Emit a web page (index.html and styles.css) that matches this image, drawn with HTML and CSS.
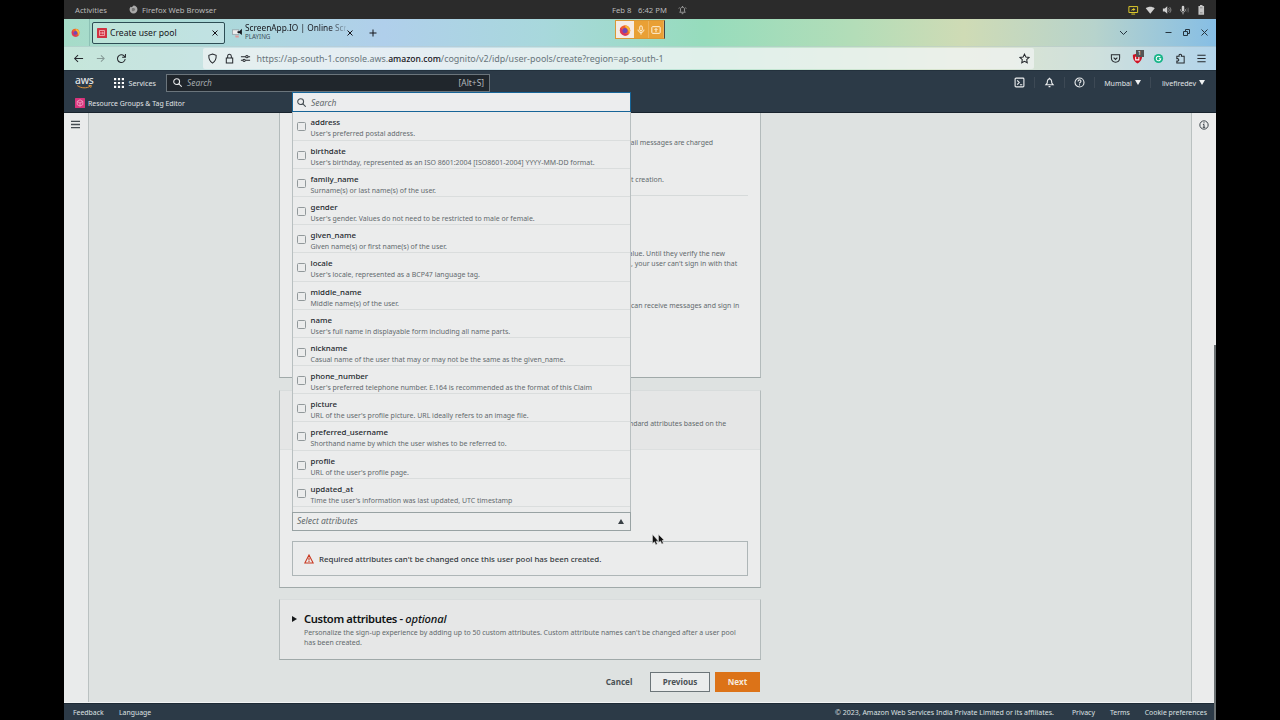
FILE: index.html
```
<!DOCTYPE html>
<html lang="en">
<head>
    <meta charset="UTF-8">
    <meta name="viewport" content="width=device-width, initial-scale=1.0">
    <title>Create user pool</title>
    <link rel="stylesheet" href="styles.css">
</head>
<body>
    <svg class="defs">
        <symbol id="firefox" viewBox="0 0 16 16">
            <circle cx="8" cy="8.5" r="7" fill="#f0602c"/>
            <path d="M8 1.500c4 .5 7 3.500 7 7 0 2-1 4-2 5 .5-4-1-6-3-7.500C8.500 4.500 8 3 8 1.500z" fill="#f9b934"/>
            <path d="M2 4.500c-1.500 4 0 8.500 3.500 10.300 3 1.500 6.500.5 8-1.800-2 1-5 .8-6.500-1C5 10 5 7 2 4.500z" fill="#d93363"/>
            <circle cx="8" cy="8.800" r="3.400" fill="#7148b5"/>
        </symbol>
        <symbol id="search" viewBox="0 0 16 16">
            <circle cx="6.500" cy="6.500" r="5.200" fill="none" stroke="currentColor" stroke-width="1.900"/>
            <path d="M10 10l5.500 5.500" stroke="currentColor" stroke-width="1.900"/>
        </symbol>
        <symbol id="close" viewBox="0 0 8 8">
            <path d="M1.500 1.500l5 5M6.500 1.500l-5 5" stroke="currentColor" fill="none"/>
        </symbol>
    </svg>

    <div class="desktop">
        <div class="gnome-bar">
            <span class="activities">Activities</span>
            <svg class="app-icon" viewBox="0 0 16 16"><path d="M3 3l2 1 3-3c4 0 7 3 7 7s-3 7-7 7-7-3-7-7c0-2 .5-3 2-5z" fill="#aaa"/><path d="M5 6c2-1 5-1 6 2-1 3-4 4-6 2z" fill="#777"/></svg>
            <span class="app-name">Firefox Web Browser</span>
            <span class="date">Feb 8</span>
            <span class="time">6:42 PM</span>
            <svg class="bell" viewBox="0 0 16 16" fill="none" stroke="#bbb" stroke-width="1.300"><path d="M3 12h10l-1.500-2V6c0-4-7-4-7 0v4zM6.500 14.500h3M8 3V1M1.500 5.500l1-2M14.500 5.500l-1-2"/></svg>
            <div class="tray">
                <svg viewBox="0 0 16 16" fill="none" stroke="#d9c62b" stroke-width="1.600"><path d="M1 2.500h14v9.500H1zM5 14.500h6"/><path d="M5 9.500c0-2 1-3 3-3V4.500L11.500 7 8 9.500V8c-1 0-2 .5-3 1.500z" fill="#d9c62b" stroke="none"/></svg>
                <svg viewBox="0 0 16 16" fill="#d0d0d0"><path d="M8 14L.8 5C5 1.800 11 1.800 15.200 5z"/></svg>
                <svg viewBox="0 0 16 16" fill="#d0d0d0"><path d="M1 5.500h3L8 2v12l-4-3.500H1z"/><path d="M10 5c1.500 2 1.500 4 0 6M12 3.500c2.500 3 2.500 6 0 9" fill="none" stroke="#aaa" stroke-width="1.200"/></svg>
                <svg viewBox="0 0 16 16" fill="#d0d0d0"><rect x="4" y="1" width="4" height="9" rx="2"/><path d="M2 7c0 6 8 6 8 0M6 12v3" fill="none" stroke="#bbb" stroke-width="1.400"/><path d="M12 5c1 2 1 4 0 6M14 4c1.500 3 1.500 5 0 8" fill="none" stroke="#777"/></svg>
                <svg viewBox="0 0 16 16" fill="#c4c4c4"><path d="M6 0h4v1.500h2.500V15.500h-9V1.500H6z"/><path d="M6 4.500h4M6 12.500h4" stroke="#666"/></svg>
            </div>
        </div>

        <div class="browser-top">
            <div class="tab-bar">
                <div class="pinned-tab"><svg><use href="#firefox"/></svg></div>
                <div class="tab active">
                    <svg class="favicon" viewBox="0 0 16 16"><rect width="16" height="16" rx="1" fill="#d13342"/><path d="M4 4h8v8H4zM4 8h4M9 6v4M12 8H9" fill="none" stroke="#f5b5ba" stroke-width="1.300"/></svg>
                    <span class="tab-title">Create user pool</span>
                    <svg class="tab-close"><use href="#close"/></svg>
                </div>
                <div class="tab playing">
                    <svg class="favicon" viewBox="0 0 16 16"><rect x="0" y="3" width="10" height="7" fill="#eee" stroke="#8a9097"/><path d="M4 12h6v3H5z" fill="#d99"/><path d="M8 5h3l4-4v10l-4-3H8z" fill="#15141a"/></svg>
                    <div class="tab-labels">
                        <span class="tab-title fade">ScreenApp.IO | Online Scr</span>
                        <span class="tab-status">PLAYING</span>
                    </div>
                    <svg class="tab-close"><use href="#close"/></svg>
                </div>
                <svg class="new-tab" viewBox="0 0 8 8"><path d="M4 .5v7M.5 4h7" stroke="#15141a"/></svg>
                <div class="sharing">
                    <div class="sharing-logo"><svg><use href="#firefox"/></svg></div>
                    <div class="sharing-btn"><svg viewBox="0 0 12 12" fill="none" stroke="#fff3dc" stroke-width="1.200"><rect x="4.500" y="1" width="3" height="6" rx="1.500"/><path d="M2.500 5.500c0 4.500 7 4.500 7 0M6 9v2.500"/></svg></div>
                    <div class="sharing-btn"><svg viewBox="0 0 12 12" fill="none" stroke="#fff3dc" stroke-width="1.200"><rect x="1" y="2" width="10" height="8" rx="1"/><path d="M6 8.500v-4M4.200 6L6 4.200 7.800 6"/></svg></div>
                </div>
                <div class="window-controls">
                    <svg class="list-tabs" viewBox="0 0 9 9"><path d="M1 3l3.500 3.500L8 3"/></svg>
                    <svg viewBox="0 0 9 9"><path d="M1.500 4.500h6"/></svg>
                    <svg viewBox="0 0 9 9"><path d="M1.500 3.500h4v4h-4zM3.500 3.500v-2h4v4h-2"/></svg>
                    <svg viewBox="0 0 9 9"><path d="M1.500 1.500l6 6M7.500 1.500l-6 6"/></svg>
                </div>
            </div>

            <div class="toolbar">
                <div class="nav-buttons">
                    <svg viewBox="0 0 12 12"><path d="M11 6H2M5.500 2.300L1.800 6l3.700 3.700"/></svg>
                    <svg class="disabled" viewBox="0 0 12 12"><path d="M2 6h8M6.500 2.500L10 6 6.500 9.500"/></svg>
                    <svg viewBox="0 0 12 12"><path d="M10 6.500A4.200 4.200 0 1 1 8.800 3.200L10.200 4.500M10.300 1v3.700H6.700"/></svg>
                </div>
                <div class="url-bar">
                    <svg viewBox="0 0 12 12"><path d="M6 1l4 1.500c.2 4-1 6.800-4 8.500-3-1.700-4.200-4.500-4-8.500z"/></svg>
                    <svg viewBox="0 0 12 12"><path d="M2.500 5.500h7V11h-7zM4 5.500V3.500c0-3 4-3 4 0v2"/></svg>
                    <svg viewBox="0 0 12 12"><path d="M1 4h5M9 4h2M1 8h2M6 8h5"/><circle cx="7.500" cy="4" r="1.300"/><circle cx="4.500" cy="8" r="1.300"/></svg>
                    <span class="url">https://ap-south-1.console.aws.<b>amazon.com</b>/cognito/v2/idp/user-pools/create?region=ap-south-1</span>
                    <svg class="star" viewBox="0 0 12 12"><path d="M6 1.200l1.500 3.100 3.400.5-2.500 2.400.6 3.500-3-1.700-3 1.700.6-3.500L1.100 4.800l3.400-.5z"/></svg>
                </div>
                <div class="extensions">
                    <svg viewBox="0 0 12 12"><path d="M1.500 2h9v3.500c0 6-9 6-9 0zM4 5l2 2 2-2"/></svg>
                    <div class="ublock">
                        <svg viewBox="0 0 12 12"><path d="M6 .5l5 1.500c.3 4-1 7.500-5 9.500C2 9.500.7 6 1 2z" fill="#cf1224" stroke="none"/><path d="M4 4v3.500h3.500V4" stroke="#fff"/></svg>
                        <span class="badge">1</span>
                    </div>
                    <svg viewBox="0 0 12 12"><circle cx="6" cy="6" r="5" fill="#15b487" stroke="none"/><path d="M8 4.500A2.500 2.500 0 1 0 8.500 6.300H6.500" stroke="#fff"/></svg>
                    <svg viewBox="0 0 12 12"><path d="M2 3.500h2.500c-.8-3 3.300-3 2.500 0h3V11H2V8.800c2.800.6 2.800-3.200 0-2.600z"/></svg>
                    <svg viewBox="0 0 12 12"><path d="M1.500 2.500h9M1.500 6h9M1.500 9.500h9"/></svg>
                </div>
            </div>
        </div>

        <header class="aws-header">
            <div class="aws-nav">
                <div class="aws-logo">
                    <span>aws</span>
                    <svg viewBox="0 0 20 5"><path d="M1 .8c5 3.500 12 3.500 16 .8M15 .7l3.500-.2-.8 3" fill="none" stroke="#e8963a" stroke-width="1.200"/></svg>
                </div>
                <div class="services">
                    <svg viewBox="0 0 10 10" fill="#fff"><path d="M0 0h2.200v2.200H0zM3.900 0h2.200v2.200H3.900zM7.800 0H10v2.200H7.800zM0 3.900h2.200v2.200H0zM3.900 3.900h2.200v2.200H3.900zM7.800 3.900H10v2.200H7.800zM0 7.800h2.200V10H0zM3.900 7.800h2.200V10H3.900zM7.800 7.800H10V10H7.800z"/></svg>
                    <span>Services</span>
                </div>
                <div class="aws-search">
                    <svg><use href="#search"/></svg>
                    <em>Search</em>
                    <span>[Alt+S]</span>
                </div>
                <div class="aws-tools">
                    <div class="tool"><svg viewBox="0 0 12 12"><rect x="1.200" y="1.200" width="9.600" height="9.600" rx="1"/><path d="M3.500 3.700L5.700 6 3.500 8.200M6.500 8.500h2.500"/></svg></div>
                    <div class="tool"><svg viewBox="0 0 12 12"><path d="M2 8.500h8L8.500 6.500c0-6-5-6-5 0zM5 10.500h2M6 2V.8"/></svg></div>
                    <div class="tool"><svg viewBox="0 0 12 12"><circle cx="6" cy="6" r="4.900"/><path d="M4.400 4.800c0-2.200 3.200-2.200 3.200-.2C7.600 5.700 6 5.700 6 7.200M6 8v1.200"/></svg></div>
                    <div class="tool menu mumbai">Mumbai <i></i></div>
                    <div class="tool menu account">livefiredev <i></i></div>
                </div>
            </div>
            <div class="aws-favorites">
                <svg viewBox="0 0 10 10"><rect width="10" height="10" rx=".5" fill="#d9347c"/><path d="M5 1.800l2.800 1.600v3.200L5 8.200 2.200 6.600V3.400zM5 5V8M5 5L2.500 3.600M5 5l2.500-1.400" fill="none" stroke="#f7bdd6" stroke-width=".7"/></svg>
                <span>Resource Groups &amp; Tag Editor</span>
            </div>
        </header>

        <div class="app">
            <aside class="side-nav"><svg viewBox="0 0 10 10"><path d="M0 1.500h10M0 5h10M0 8.500h10" stroke="#444c52" stroke-width="1.400"/></svg></aside>
            <main class="content">
                <section class="card verification">
                    <p class="line l1">mail messages are charged</p>
                    <p class="line l2">t creation.</p>
                    <hr>
                    <p class="line l3">value. Until they verify the new</p>
                    <p class="line l4">, your user can't sign in with that</p>
                    <p class="line l5">can receive messages and sign in</p>
                </section>

                <section class="card required">
                    <div class="card-header">
                        <p class="line l6">andard attributes based on the</p>
                    </div>
                    <div class="card-body">
                        <div class="select">
                            <em>Select attributes</em>
                            <i class="arrow-up"></i>
                            <div class="dropdown">
                                <div class="dropdown-search">
                                    <svg><use href="#search"/></svg>
                                    <em>Search</em>
                                </div>
                                <ul class="options" id="options"></ul>
                            </div>
                        </div>
                        <div class="notice">
                            <svg viewBox="0 0 12 12"><path d="M6 1.200l5 9.600H1zM6 4.500v3.300M6 8.500v1.200" fill="none" stroke="#c8371f" stroke-width="1.300"/></svg>
                            <span>Required attributes can't be changed once this user pool has been created.</span>
                        </div>
                    </div>
                </section>

                <section class="card custom">
                    <i class="arrow-right"></i>
                    <div>
                        <h2>Custom attributes - <em>optional</em></h2>
                        <p>Personalize the sign-up experience by adding up to 50 custom attributes. Custom attribute names can't be changed after a user pool<br>has been created.</p>
                    </div>
                </section>

                <div class="actions">
                    <button class="link">Cancel</button>
                    <button class="normal">Previous</button>
                    <button class="primary">Next</button>
                </div>
            </main>
            <aside class="info-panel"><svg viewBox="0 0 12 12"><circle cx="6" cy="6" r="5" fill="none" stroke="#3d454b" stroke-width="1.200"/><path d="M4.700 5.300H6v3.500M4.500 8.800h3M6 2.700V4" fill="none" stroke="#3d454b" stroke-width="1.200"/></svg></aside>
        </div>

        <footer class="aws-footer">
            <span class="feedback">Feedback</span>
            <span>Language</span>
            <span class="copyright">© 2023, Amazon Web Services India Private Limited or its affiliates.</span>
            <span class="privacy">Privacy</span>
            <span class="terms">Terms</span>
            <span class="cookies">Cookie preferences</span>
        </footer>

        <div class="scrollbar"></div>
        <svg class="cursor" viewBox="0 0 12 12"><path d="M.5.5v9l2-1.700 1.300 3 1.500-.7L4 7.200l2.300-.3zM6.500.5v8l2-1.500 1.300 3 1.500-.7-1.300-2.800 2-.5z" fill="#111" stroke="#ddd" stroke-width=".5"/></svg>
    </div>

    <script>
        const attributes = [
            ['address', "User's preferred postal address."],
            ['birthdate', "User's birthday, represented as an ISO 8601:2004 [ISO8601-2004] YYYY-MM-DD format."],
            ['family_name', 'Surname(s) or last name(s) of the user.'],
            ['gender', "User's gender. Values do not need to be restricted to male or female."],
            ['given_name', 'Given name(s) or first name(s) of the user.'],
            ['locale', "User's locale, represented as a BCP47 language tag."],
            ['middle_name', 'Middle name(s) of the user.'],
            ['name', "User's full name in displayable form including all name parts."],
            ['nickname', 'Casual name of the user that may or may not be the same as the given_name.'],
            ['phone_number', "User's preferred telephone number. E.164 is recommended as the format of this Claim"],
            ['picture', "URL of the user's profile picture. URL ideally refers to an image file."],
            ['preferred_username', 'Shorthand name by which the user wishes to be referred to.'],
            ['profile', "URL of the user's profile page."],
            ['updated_at', "Time the user's information was last updated, UTC timestamp"]
        ];

        document.getElementById('options').innerHTML = attributes.map(([name, text]) => `
            <li class="option">
                <span class="checkbox"></span>
                <div>
                    <div class="option-name">${name}</div>
                    <div class="option-text">${text}</div>
                </div>
            </li>
        `).join('');
    </script>
</body>
</html>
```

FILE: styles.css
```
:root {
    --navy: #2c3a47;
    --page: #dee2e1;
    --card: #ebecec;
    --card-header: #e5e6e6;
    --border: #b3bbbb;
    --text: #23282c;
    --muted: #62696c;
    --orange: #dc7318;
}

* {
    margin: 0;
    padding: 0;
    box-sizing: border-box;
}

body {
    background: #000;
    font-family: "Noto Sans", "Open Sans", sans-serif;
    font-size: 6.950px;
    color: var(--text);
    height: 720px;
    overflow: hidden;
}

svg {
    flex: none;
    display: block;
}

.defs {
    display: none;
}

.desktop {
    position: relative;
    width: 1152px;
    height: 720px;
    margin: 0 auto;
    display: flex;
    flex-direction: column;
}

/* system bar */
.gnome-bar {
    height: 19px;
    flex: none;
    background: #2b2b2b;
    color: #b9b9b9;
    font-size: 7.700px;
    display: flex;
    align-items: center;
    padding-left: 11px;
    white-space: nowrap;
}

.activities {
    width: 54px;
}

.app-icon {
    width: 9px;
    height: 9px;
    margin-right: 4px;
}

.app-name {
    width: 470px;
}

.date {
    width: 26px;
}

.time {
    width: 40px;
}

.bell {
    width: 9px;
    height: 10px;
}

.tray {
    margin: 0 10px 0 auto;
    display: flex;
    gap: 6.300px;
}

.tray svg {
    width: 10.500px;
    height: 10px;
}

/* browser chrome */
.browser-top {
    height: 51px;
    flex: none;
    background: linear-gradient(90deg, #a6dcc8 0, #add8dd 180px, #b0cfeb 320px, #a8d8dc 480px, #96dcbc 640px, #b3ddb8 790px, #cfdbb5 900px, #b7d3cc 1030px, #86bee5 1152px);
}

.tab-bar {
    height: 27px;
    display: flex;
    align-items: center;
    position: relative;
}

.pinned-tab {
    width: 26px;
    height: 27px;
    padding: 9px 7px;
    border-right: 1px solid rgba(60, 110, 110, 0.25);
}

.pinned-tab svg {
    width: 9px;
    height: 9px;
}

.tab {
    display: flex;
    align-items: center;
    color: #15141a;
    height: 22px;
}

.tab.active {
    width: 133px;
    margin-left: 2px;
    padding: 0 5px 0 4px;
    border: 1px solid #2d4d54;
    border-radius: 2px;
    background: rgba(255, 255, 255, 0.25);
}

.favicon {
    width: 10px;
    height: 10px;
    margin-right: 3px;
}

.tab-title {
    font-size: 8.600px;
    line-height: 10px;
    white-space: nowrap;
}

.tab-close {
    width: 8px;
    height: 8px;
    margin-left: auto;
}

.tab.playing {
    width: 122px;
    margin-left: 7px;
}

.playing .favicon {
    width: 11px;
    margin-right: 2px;
}

.tab-labels {
    width: 102px;
    margin-top: -1px;
    overflow: hidden;
    display: flex;
    flex-direction: column;
}

.fade {
    font-size: 8.300px;
    -webkit-mask-image: linear-gradient(90deg, #000 84px, transparent 104px);
    mask-image: linear-gradient(90deg, #000 84px, transparent 104px);
}

.tab-status {
    font-size: 6.200px;
    line-height: 8px;
    color: #3b4c58;
}

.new-tab {
    width: 8px;
    height: 8px;
    margin-left: 15px;
}

.sharing {
    position: absolute;
    left: 551px;
    top: 1px;
    height: 19px;
    display: flex;
    background: #e9a035;
    border: 1px solid #d99836;
    border-right-color: #444;
}

.sharing-logo {
    width: 18px;
    background: #f5ebe4;
    padding: 3px 3px;
}

.sharing-logo svg {
    width: 12px;
    height: 12px;
}

.sharing-btn {
    width: 15px;
    display: flex;
    align-items: center;
    justify-content: center;
    border-right: 1px solid #edb25c;
}

.sharing-btn svg {
    width: 10px;
    height: 10px;
}

.window-controls {
    margin-left: auto;
    padding-right: 7px;
    display: flex;
    gap: 9px;
}

.window-controls svg {
    width: 9px;
    height: 9px;
    fill: none;
    stroke: #25343f;
}

.window-controls .list-tabs {
    margin-right: 27px;
}

.toolbar {
    height: 24px;
    background: rgba(240, 243, 243, 0.42);
    border-top: 1px solid rgba(70, 110, 120, 0.15);
    display: flex;
    align-items: center;
}

.toolbar svg {
    width: 11px;
    height: 11px;
    fill: none;
    stroke: #25282d;
    stroke-width: 1.1;
}

.nav-buttons {
    width: 139px;
    padding-left: 9px;
    display: flex;
    gap: 10.500px;
}

.nav-buttons .disabled {
    opacity: 0.4;
}

.url-bar {
    width: 831px;
    height: 21px;
    padding: 0 4px;
    background: rgba(242, 244, 244, 0.68);
    border-radius: 2px;
    display: flex;
    align-items: center;
    gap: 5.500px;
}

.url {
    margin-top: -1px;
    font-size: 8.930px;
    color: #68757b;
    white-space: nowrap;
}

.url b {
    font-weight: 500;
    font-size: 8.600px;
    color: #15141a;
}

.url-bar .star {
    margin-left: auto;
}

.extensions {
    margin-left: auto;
    padding-right: 9px;
    display: flex;
    gap: 10.500px;
}

.ublock {
    position: relative;
}

.badge {
    position: absolute;
    left: 4px;
    top: -3px;
    width: 8px;
    height: 7px;
    background: #555;
    color: #fff;
    font-size: 6px;
    line-height: 7px;
    text-align: center;
}

/* aws console header */
.aws-header {
    height: 43px;
    flex: none;
    background: var(--navy);
    color: #e0e3e6;
    border-top: 1px solid #23313d;
    border-bottom: 1px solid #18232d;
}

.aws-nav {
    height: 23px;
    display: flex;
    align-items: center;
}

.aws-logo {
    width: 40px;
    margin-right: 10px;
    padding-left: 11px;
}

.aws-logo span {
    display: block;
    font-size: 10.300px;
    font-weight: 500;
    line-height: 8px;
    letter-spacing: -0.200px;
}

.aws-logo svg {
    width: 19px;
    height: 4px;
    margin-top: 1px;
}

.services {
    width: 52px;
    display: flex;
    align-items: center;
    gap: 4.500px;
    font-size: 7.200px;
}

.services svg {
    width: 10px;
    height: 10px;
}

.aws-search {
    width: 324px;
    height: 18px;
    background: #20262c;
    border: 1px solid #6b757c;
    display: flex;
    align-items: center;
    padding: 0 5px 0 6px;
    font-size: 8.400px;
    color: #a3a9ad;
}

.aws-search svg {
    width: 9px;
    height: 9px;
    margin-right: 5px;
    color: #e7e9ea;
}

.aws-search span {
    margin-left: auto;
    color: #b4babd;
}

.aws-tools {
    margin-left: auto;
    display: flex;
    align-items: center;
}

.tool {
    width: 30px;
    height: 11px;
    display: flex;
    align-items: center;
    justify-content: center;
    border-right: 1px solid #3d4955;
    font-size: 7.100px;
}

.tool svg {
    width: 11px;
    height: 11px;
    fill: none;
    stroke: #eef0f1;
    stroke-width: 1.200;
}

.tool.mumbai {
    width: 56px;
}

.tool.account {
    width: 65px;
    border: 0;
}

.tool i {
    margin-left: 3px;
    border: 3px solid transparent;
    border-top: 5px solid #eef0f1;
    border-bottom: 0;
}

.aws-favorites {
    height: 18px;
    padding-left: 11px;
    display: flex;
    align-items: center;
    gap: 3px;
    font-size: 6.930px;
}

.aws-favorites svg {
    width: 10px;
    height: 10px;
}

/* page */
.app {
    height: 590px;
    flex: none;
    display: flex;
    background: var(--page);
    border-bottom: 1px solid #f3f4f4;
}

.side-nav {
    width: 25px;
    padding: 7px 7px;
    background: #e9ebeb;
    border-right: 1px solid #bac1c1;
}

.side-nav svg {
    width: 9px;
    height: 9px;
}

.info-panel {
    width: 25px;
    padding: 7px 7px;
    background: var(--card);
    border-left: 1px solid #bac1c1;
}

.info-panel svg {
    width: 10px;
    height: 10px;
}

.content {
    flex: 1;
    padding-left: 190px;
}

.card {
    width: 482px;
    background: var(--card);
    border: 1px solid var(--border);
    border-top-color: #d8dcdc;
    border-bottom-color: #a0a9a9;
    margin-bottom: 12px;
    color: var(--muted);
}

.line {
    line-height: 10px;
    white-space: nowrap;
}

.verification {
    height: 265px;
    padding: 25px 12px 0 346px;
    border-top: 0;
}

.verification hr {
    border: 0;
    border-top: 1px solid #d6dada;
}

.l1 {
    margin-left: -2px;
}

.l2 {
    margin: 27px 0 10px 5px;
}

.l3 {
    margin: 53px 0 0 -1px;
}

.l4 {
    margin-left: 5px;
}

.l5 {
    margin: 32px 0 0 5px;
}

.card-header {
    height: 59px;
    padding: 28px 0 0 345px;
    background: var(--card-header);
    border-bottom: 1px solid #dcdfdf;
}

.required {
    height: 198px;
    margin-bottom: 11px;
}

.card-body {
    padding: 62px 12px 0;
}

.select {
    position: relative;
    width: 339px;
    height: 19px;
    padding: 0 6px 1px 4px;
    border: 1px solid #98a2a3;
    background: #eceded;
    display: flex;
    align-items: center;
    justify-content: space-between;
    font-size: 8.550px;
}

.arrow-up {
    border: 3.500px solid transparent;
    border-bottom: 5px solid #3a4146;
    border-top: 0;
}

.dropdown {
    position: absolute;
    left: -1px;
    bottom: 18px;
    width: 339px;
    z-index: 10;
    background: var(--card);
}

.dropdown-search {
    height: 20px;
    padding-left: 4px;
    border: 1.500px solid #176598;
    background: #ecedee;
    display: flex;
    align-items: center;
    font-size: 8.500px;
}

.dropdown-search svg {
    width: 9px;
    height: 9px;
    margin-right: 5px;
    color: #454d52;
}

.options {
    list-style: none;
    padding-bottom: 5px;
    border: 1px solid #b8bfc0;
    border-top: 0;
    border-bottom: 0;
}

.option {
    height: 28.200px;
    padding: 4px 0 0 4px;
    border-bottom: 1px solid #dadddd;
    display: flex;
    white-space: nowrap;
}

.checkbox {
    width: 9px;
    height: 9px;
    margin: 6px 4.500px 0 0;
    border: 1px solid #92999b;
    border-radius: 1.500px;
}

.option-name {
    font-size: 7.900px;
    font-weight: 500;
    line-height: 12px;
    color: var(--text);
}

.option-text {
    font-size: 6.970px;
    line-height: 11px;
}

.notice {
    width: 456px;
    height: 35px;
    margin-top: 10px;
    padding-left: 11px;
    border: 1px solid #aeb6b7;
    display: flex;
    align-items: center;
    gap: 5px;
    font-size: 7.900px;
    font-weight: 500;
    color: #33393d;
}

.notice svg {
    width: 10px;
    height: 10px;
}

.custom {
    height: 61px;
    padding: 11px 0 0 12px;
    background: #e6e7e7;
    display: flex;
    white-space: nowrap;
}

.arrow-right {
    height: 0;
    margin: 5px 7px 0 0;
    border: 3.500px solid transparent;
    border-left: 5.500px solid #16191b;
    border-right: 0;
}

.custom h2 {
    margin-bottom: 2px;
    font-size: 11.200px;
    line-height: 15px;
    font-weight: 600;
    letter-spacing: -0.370px;
    color: #0f1214;
}

.custom h2 em {
    font-weight: 500;
    letter-spacing: -0.150px;
}

.custom p {
    font-size: 6.940px;
    line-height: 10px;
}

.actions {
    width: 481px;
    display: flex;
    justify-content: flex-end;
}

button {
    height: 20px;
    padding-bottom: 1px;
    font-family: inherit;
    font-size: 8.100px;
    font-weight: 700;
    border: 1px solid transparent;
    background: none;
    color: #4b5256;
}

button.link {
    width: 50px;
    margin-right: 6px;
}

button.normal {
    width: 60px;
    margin-right: 5px;
    background: #ebeded;
    border-color: #6c7579;
}

button.primary {
    width: 45px;
    background: var(--orange);
    color: #f7e9dc;
}

.aws-footer {
    flex: 1;
    padding: 1px 9px 0 9px;
    background: var(--navy);
    border-top: 1px solid #1e2b36;
    color: #dde0e2;
    font-size: 6.900px;
    display: flex;
    align-items: center;
    white-space: nowrap;
}

.feedback {
    width: 46px;
}

.copyright {
    margin-left: auto;
    margin-right: 18px;
    font-size: 7px;
}

.privacy {
    margin-right: 15px;
}

.terms {
    margin-right: 15px;
}

.scrollbar {
    position: absolute;
    right: 0;
    top: 345px;
    width: 2px;
    height: 375px;
    background: #6b7173;
}

.cursor {
    position: absolute;
    left: 588px;
    top: 534px;
    width: 12px;
    height: 12px;
}
```
